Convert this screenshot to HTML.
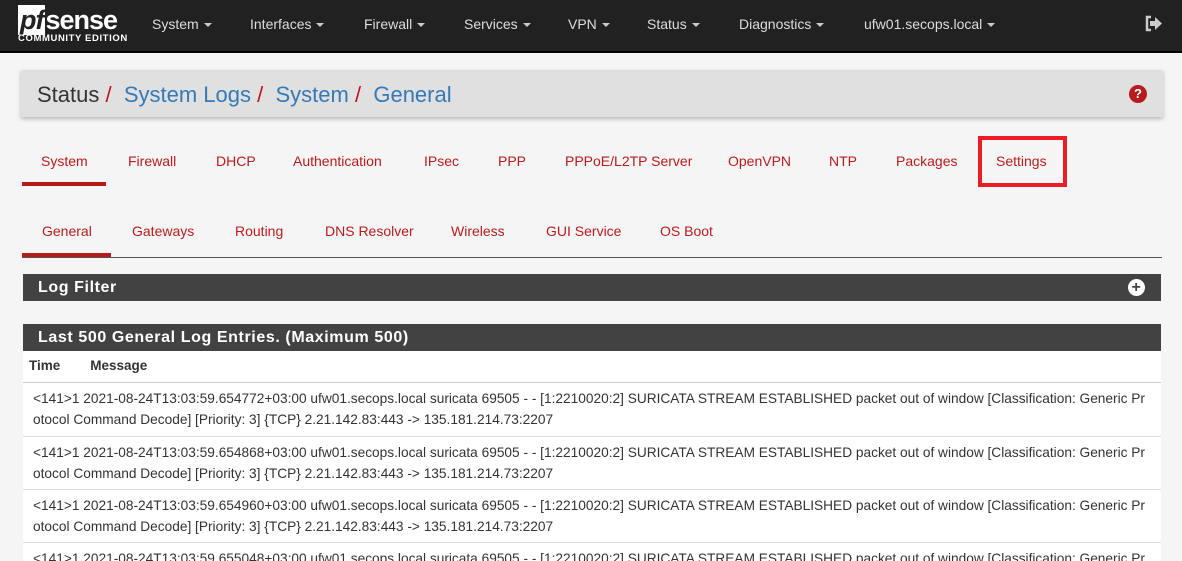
<!DOCTYPE html><html><head><style>
*{box-sizing:border-box;margin:0;padding:0}
html,body{width:1182px;height:561px;overflow:hidden}
body{background:#f5f5f5;font-family:"Liberation Sans",sans-serif;position:relative}
.nav{position:absolute;left:0;top:0;width:1182px;height:53px;background:#212121;border-bottom:2px solid #000}
.nav .m{position:absolute;top:16px;color:#ddd;font-size:14px}
.car{display:inline-block;border-left:4px solid transparent;border-right:4px solid transparent;border-top:4px solid #ccc;vertical-align:middle;margin-left:5px}
.logo{position:absolute;left:18px;top:7px;color:#fff}
.bc{position:absolute;left:21px;top:70px;width:1142px;height:47px;background:#e0e0e0;box-shadow:0 2px 4px rgba(0,0,0,.25);font-size:22px;padding:12px 16px;color:#333}
.bc a{color:#337ab7}.bc i{color:#c0151d;font-style:normal}
.t{position:absolute;font-size:14px;color:#b71c1c}
.ph{position:absolute;left:23px;width:1138px;height:27px;background:#424242;color:#fff;font-weight:bold;font-size:16px;padding:5px 15px;letter-spacing:.6px}
.tb{position:absolute;left:23px;width:1138px;height:210px;overflow:hidden;background:#fff;font-size:13.5px;color:#333}
.row{height:53px;border-top:1px solid #ddd;padding:5px 10px;line-height:21px;font-size:13.7px;white-space:nowrap}
</style></head><body>
<div class="nav">
<div class="logo"><div style="font-size:27px;font-weight:bold;line-height:26px;letter-spacing:-1px"><span style="background:#fff;color:#212121;font-style:italic;padding:0 2px">pf</span>sense</div><div style="font-size:9.5px;font-weight:bold;letter-spacing:.6px">COMMUNITY EDITION</div></div>
<span class="m" style="left:152px">System<span class="car"></span></span>
<span class="m" style="left:250px">Interfaces<span class="car"></span></span>
<span class="m" style="left:364px">Firewall<span class="car"></span></span>
<span class="m" style="left:464px">Services<span class="car"></span></span>
<span class="m" style="left:568px">VPN<span class="car"></span></span>
<span class="m" style="left:647px">Status<span class="car"></span></span>
<span class="m" style="left:739px">Diagnostics<span class="car"></span></span>
<span class="m" style="left:864px">ufw01.secops.local<span class="car"></span></span>
<svg style="position:absolute;left:1144px;top:15px" width="18" height="17" viewBox="0 0 18 17"><path d="M7 2H3v13h4" fill="none" stroke="#ccc" stroke-width="2.5"/><path d="M6 6h5V2l7 6.5-7 6.5V11H6z" fill="#ccc"/></svg>
</div>
<div class="bc">Status <i>/</i> &nbsp;<a>System Logs</a> <i>/</i> &nbsp;<a>System</a> <i>/</i> &nbsp;<a>General</a>
<span style="position:absolute;right:16px;top:15px;width:18px;height:18px;border-radius:50%;background:#b71c1c;color:#fff;font-size:13px;font-weight:bold;text-align:center;line-height:18px">?</span></div>
<span class="t" style="left:41px;top:153px">System</span>
<div style="position:absolute;left:22px;top:182px;width:84px;height:4px;background:#b71c1c"></div>
<span class="t" style="left:128px;top:153px">Firewall</span>
<span class="t" style="left:216px;top:153px">DHCP</span>
<span class="t" style="left:293px;top:153px">Authentication</span>
<span class="t" style="left:424px;top:153px">IPsec</span>
<span class="t" style="left:498px;top:153px">PPP</span>
<span class="t" style="left:565px;top:153px">PPPoE/L2TP Server</span>
<span class="t" style="left:728px;top:153px">OpenVPN</span>
<span class="t" style="left:829px;top:153px">NTP</span>
<span class="t" style="left:896px;top:153px">Packages</span>
<span class="t" style="left:996px;top:153px">Settings</span>
<div style="position:absolute;left:978px;top:136px;width:89px;height:51px;border:4px solid #ed1c24"></div>
<div style="position:absolute;left:22px;top:257px;width:1140px;height:1px;background:#555"></div>
<span class="t" style="left:42px;top:223px">General</span>
<div style="position:absolute;left:22px;top:253px;width:89px;height:4px;background:#b71c1c"></div>
<span class="t" style="left:132px;top:223px">Gateways</span>
<span class="t" style="left:235px;top:223px">Routing</span>
<span class="t" style="left:325px;top:223px">DNS Resolver</span>
<span class="t" style="left:451px;top:223px">Wireless</span>
<span class="t" style="left:546px;top:223px">GUI Service</span>
<span class="t" style="left:660px;top:223px">OS Boot</span>
<div class="ph" style="top:274px">Log Filter<span style="position:absolute;right:16px;top:5px;width:17px;height:17px;border-radius:50%;background:#fff;color:#424242;text-align:center;line-height:17px;font-size:16px">+</span></div>
<div class="ph" style="top:324px">Last 500 General Log Entries. (Maximum 500)</div>
<div class="tb" style="top:351px">
<div style="height:32px;padding:7px 6px;font-weight:bold;border-bottom:1px solid #ccc"><span>Time</span><span style="margin-left:30px">Message</span></div>
<div class="row" style="border-top:none">&lt;141&gt;1 2021-08-24T13:03:59.654772+03:00 ufw01.secops.local suricata 69505 - - [1:2210020:2] SURICATA STREAM ESTABLISHED packet out of window [Classification: Generic Pr<br>otocol Command Decode] [Priority: 3] {TCP} 2.21.142.83:443 -&gt; 135.181.214.73:2207</div>
<div class="row">&lt;141&gt;1 2021-08-24T13:03:59.654868+03:00 ufw01.secops.local suricata 69505 - - [1:2210020:2] SURICATA STREAM ESTABLISHED packet out of window [Classification: Generic Pr<br>otocol Command Decode] [Priority: 3] {TCP} 2.21.142.83:443 -&gt; 135.181.214.73:2207</div>
<div class="row">&lt;141&gt;1 2021-08-24T13:03:59.654960+03:00 ufw01.secops.local suricata 69505 - - [1:2210020:2] SURICATA STREAM ESTABLISHED packet out of window [Classification: Generic Pr<br>otocol Command Decode] [Priority: 3] {TCP} 2.21.142.83:443 -&gt; 135.181.214.73:2207</div>
<div class="row">&lt;141&gt;1 2021-08-24T13:03:59.655048+03:00 ufw01.secops.local suricata 69505 - - [1:2210020:2] SURICATA STREAM ESTABLISHED packet out of window [Classification: Generic Pr<br>otocol Command Decode]</div>
</div>
</body></html>
